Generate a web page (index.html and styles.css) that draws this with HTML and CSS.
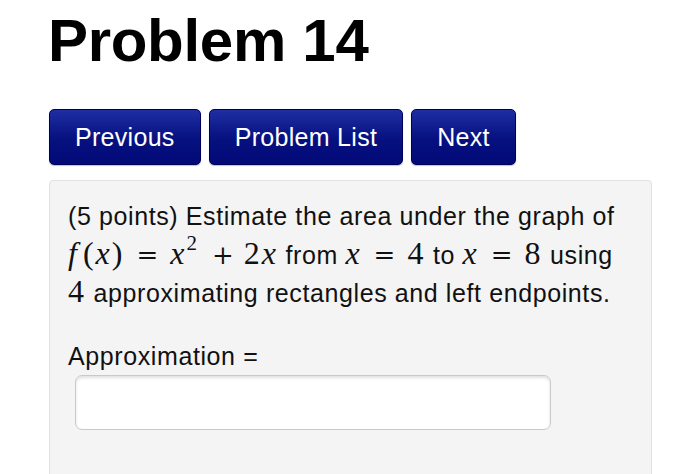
FILE: index.html
```html
<!DOCTYPE html>
<html lang="en">
<head>
<meta charset="utf-8">
<title>Problem 14</title>
<link rel="stylesheet" href="styles.css">
</head>
<body>
<div class="page">
  <h1 class="title">Problem 14</h1>
  <nav class="nav">
    <a class="btn" href="#">Previous</a>
    <a class="btn" href="#">Problem List</a>
    <a class="btn" href="#">Next</a>
  </nav>
  <div class="card">
    <p class="problem">(5 points) Estimate the area under the graph of <span class="math"><i class="fn">f</i>(<i>x</i>)<span class="rel">=</span><i>x</i><sup>2</sup><span class="bin">+</span>2<i>x</i></span> from <span class="math"><i>x</i><span class="rel">=</span>4</span> to <span class="math"><i>x</i><span class="rel">=</span>8</span> using <span class="math">4</span> approximating rectangles and left endpoints.</p>
    <p class="answer">Approximation =</p>
    <input class="field" type="text" aria-label="Approximation">
  </div>
</div>
</body>
</html>
```

FILE: styles.css
```css
html, body {
  margin: 0;
  padding: 0;
  background: #ffffff;
}
body {
  font-family: "Liberation Sans", Arial, Helvetica, sans-serif;
  color: #111111;
  overflow: hidden;
}
.page {
  padding: 7px 0 0 48px;
  width: 605px;
}
.title {
  margin: 0;
  font-size: 60px;
  font-weight: bold;
  line-height: 67px;
  color: #000000;
  letter-spacing: -0.3px;
}
.nav {
  display: flex;
  gap: 8px;
  margin-top: 35px;
  padding-left: 1px;
}
.btn {
  display: flex;
  align-items: center;
  justify-content: center;
  box-sizing: border-box;
  height: 56px;
  padding: 0 25px;
  border: 1px solid #00005a;
  border-radius: 5px;
  background: linear-gradient(#1e2ea2, #06107f 55%, #020a78);
  color: #ffffff;
  font-size: 25px;
  text-decoration: none;
  letter-spacing: 0.3px;
  box-shadow: 0 1px 1px rgba(0, 0, 0, 0.25);
}
.card {
  margin-top: 15px;
  margin-left: 1px;
  box-sizing: border-box;
  width: 603px;
  min-height: 320px;
  padding: 16px 30px 40px 18px;
  background: #f4f4f4;
  border: 1px solid #e2e2e2;
  border-radius: 4px;
}
.problem {
  margin: 0;
  font-size: 25px;
  line-height: 38.5px;
  letter-spacing: 0.6px;
}
.math {
  font-family: "Liberation Serif", "Times New Roman", serif;
  font-size: 32px;
  line-height: 28px;
  letter-spacing: 2px;
}
.math i {
  font-style: italic;
}
.math .fn {
  margin-right: 4px;
}
.math sup {
  font-size: 21px;
  line-height: 0;
  vertical-align: 14px;
  letter-spacing: 0;
  margin-left: 0;
  margin-right: 5px;
}
.rel,
.bin {
  font-family: "DejaVu Serif", "Liberation Serif", serif;
  font-size: 26px;
  letter-spacing: 0;
}
.rel {
  margin: 0 12px;
}
.bin {
  margin: 0 10px;
}
.answer {
  margin: 24px 0 0;
  font-size: 25px;
  line-height: 38.5px;
  letter-spacing: 0.6px;
}
.field {
  display: block;
  box-sizing: border-box;
  margin: 0 0 0 7px;
  width: 476px;
  height: 55px;
  padding: 0 10px;
  background: #ffffff;
  border: 1px solid #c9c9c9;
  border-radius: 7px;
  box-shadow: inset 0 2px 3px rgba(0, 0, 0, 0.12);
  font-size: 24px;
  font-family: "Liberation Sans", Arial, sans-serif;
}
```
